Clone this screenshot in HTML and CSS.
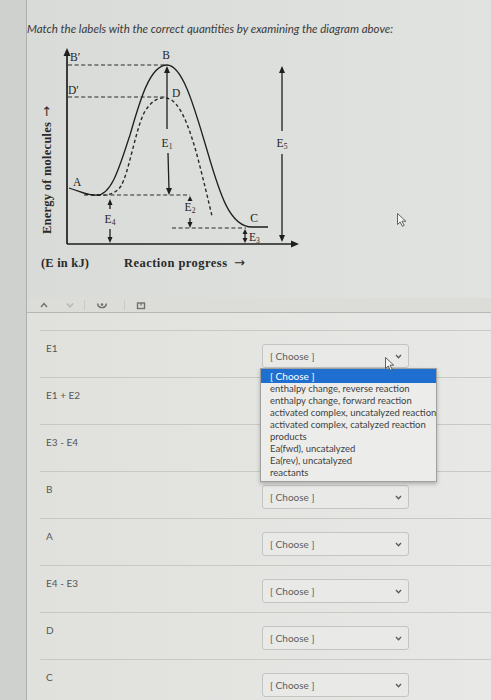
FILE: index.html
```html
<!DOCTYPE html>
<html lang="en">

<head>
	<meta charset="utf-8">
	<title>Quiz - matching question</title>
	<link rel="stylesheet" href="styles.css">
</head>

<body>
	<div class="sheet">
		<div class="question">
			<p class="prompt">Match the labels with the correct quantities by examining the diagram above:</p>
			<!-- energy profile, drawn in page coordinates -->
			<svg class="diagram" width="300" height="232" viewBox="27 44 300 232">
				<g stroke="#1e1e1e" fill="none">
					<line x1="67" y1="54" x2="67" y2="244" stroke-width="1.7" />
					<line x1="67" y1="244" x2="293" y2="244" stroke-width="1.7" />
				</g>
				<g stroke="#2a2a2a" stroke-width="1.2" stroke-dasharray="4 2.6" fill="none">
					<line x1="68" y1="65" x2="164" y2="65" />
					<line x1="68" y1="97" x2="165" y2="97" />
					<line x1="84" y1="195" x2="190" y2="195" />
					<line x1="172" y1="228" x2="246" y2="228" />
					<path d="M85,194 C100,196 114,197 121,186 C129,172 135,132 144,113 C151,101 158,97 166,98 C180,99 190,130 197,155 C203,178 208,199 212,216" stroke-width="1.4" stroke-dasharray="3.4 2.6" />
				</g>
				<path d="M69,188 C82,192 88,196 97,195 C112,195 120,165 130,135 C140,100 150,65 167,65 C183,65 195,110 207,150 C220,195 230,227 252,227 L268,227" stroke="#1e1e1e" stroke-width="1.3" fill="none" />
				<g stroke="#1e1e1e" stroke-width="1.3">
					<line x1="167" y1="70" x2="167" y2="129" />
					<line x1="168" y1="153" x2="169" y2="190" />
					<line x1="110" y1="205" x2="110" y2="209" />
					<line x1="110" y1="229" x2="110" y2="238" />
					<line x1="190" y1="218" x2="190" y2="223" />
					<line x1="245" y1="233" x2="245" y2="239" />
					<line x1="282" y1="72" x2="282" y2="131" />
					<line x1="282" y1="154" x2="282" y2="237" />
				</g>
				<g fill="#1e1e1e">
					<polygon points="67,48 63.5,56 70.5,56" />
					<polygon points="299,244 291,240.5 291,247.5" />
					<polygon points="167,66 164,73 170,73" />
					<polygon points="169,195 166,188 172,188" />
					<polygon points="110,199 107.5,205 112.5,205" />
					<polygon points="110,243 107.5,237 112.5,237" />
					<polygon points="190,196 187.5,201 192.5,201" />
					<polygon points="190,228 187.5,222 192.5,222" />
					<polygon points="245,229 242.5,234 247.5,234" />
					<polygon points="245,243 242.5,238 247.5,238" />
					<polygon points="282,66 279,73 285,73" />
					<polygon points="282,242 279,235 285,235" />
				</g>
				<g class="marks">
					<text x="70" y="61">B′</text>
					<text x="166" y="59" text-anchor="middle">B</text>
					<text x="68" y="94">D′</text>
					<text x="172" y="97">D</text>
					<text x="73" y="186">A</text>
					<text x="254" y="222" text-anchor="middle">C</text>
					<text x="167" y="147" text-anchor="middle">E<tspan class="sub" dy="2">1</tspan></text>
					<text x="110" y="223" text-anchor="middle">E<tspan class="sub" dy="2">4</tspan></text>
					<text x="190" y="211" text-anchor="middle">E<tspan class="sub" dy="2">2</tspan></text>
					<text x="249" y="241">E<tspan class="sub" dy="2">3</tspan></text>
					<text x="282" y="147" text-anchor="middle">E<tspan class="sub" dy="2">5</tspan></text>
				</g>
				<g class="axis-title">
					<text x="41" y="267" textLength="48">(E in kJ)</text>
					<text x="124" y="267" textLength="103">Reaction progress</text>
					<text class="arrow" x="234" y="267">→</text>
					<text transform="translate(51,234) rotate(-90)" textLength="112">Energy of molecules</text>
					<text class="arrow" transform="translate(51,117) rotate(-90)">→</text>
				</g>
			</svg>
		</div>

		<div class="toolbar">
			<svg class="tool" width="10" height="8" viewBox="0 0 10 8">
				<path d="M2,6 L5,2.5 L8,6" />
			</svg>
			<svg class="tool tool-faint" width="10" height="8" viewBox="0 0 10 8">
				<path d="M2,2.5 L5,6 L8,2.5" />
			</svg>
			<span class="tool-sep"></span>
			<svg class="tool" width="12" height="9" viewBox="0 0 12 9">
				<path d="M1.5,2.5 C2.5,8 9.5,8 10.5,2.5" />
				<circle cx="6" cy="3.5" r="1.3" />
			</svg>
			<span class="tool-sep"></span>
			<svg class="tool" width="10" height="9" viewBox="0 0 10 9">
				<rect x="1.5" y="2" width="7" height="5.5" />
				<path d="M5,2 L5,4.5" />
			</svg>
		</div>

		<div class="answers">
			<div class="row">
				<span class="label">E1</span>
				<div class="pick">
					<div class="select">[ Choose ]<svg class="chevron" width="7" height="5" viewBox="0 0 7 5"><path d="M1,1 L3.5,3.8 L6,1" /></svg></div>
					<ul class="options">
						<li class="current">[ Choose ]</li>
						<li>enthalpy change, reverse reaction</li>
						<li>enthalpy change, forward reaction</li>
						<li>activated complex, uncatalyzed reaction</li>
						<li>activated complex, catalyzed reaction</li>
						<li>products</li>
						<li>Ea(fwd), uncatalyzed</li>
						<li>Ea(rev), uncatalyzed</li>
						<li>reactants</li>
					</ul>
				</div>
			</div>
			<!-- the two selects below sit under the open list -->
			<div class="row">
				<span class="label">E1 + E2</span>
				<div class="pick covered">
					<div class="select">[ Choose ]<svg class="chevron" width="7" height="5" viewBox="0 0 7 5"><path d="M1,1 L3.5,3.8 L6,1" /></svg></div>
				</div>
			</div>
			<div class="row">
				<span class="label">E3 - E4</span>
				<div class="pick covered">
					<div class="select">[ Choose ]<svg class="chevron" width="7" height="5" viewBox="0 0 7 5"><path d="M1,1 L3.5,3.8 L6,1" /></svg></div>
				</div>
			</div>
			<div class="row">
				<span class="label">B</span>
				<div class="pick">
					<div class="select">[ Choose ]<svg class="chevron" width="7" height="5" viewBox="0 0 7 5"><path d="M1,1 L3.5,3.8 L6,1" /></svg></div>
				</div>
			</div>
			<div class="row">
				<span class="label">A</span>
				<div class="pick">
					<div class="select">[ Choose ]<svg class="chevron" width="7" height="5" viewBox="0 0 7 5"><path d="M1,1 L3.5,3.8 L6,1" /></svg></div>
				</div>
			</div>
			<div class="row">
				<span class="label">E4 - E3</span>
				<div class="pick">
					<div class="select">[ Choose ]<svg class="chevron" width="7" height="5" viewBox="0 0 7 5"><path d="M1,1 L3.5,3.8 L6,1" /></svg></div>
				</div>
			</div>
			<div class="row">
				<span class="label">D</span>
				<div class="pick">
					<div class="select">[ Choose ]<svg class="chevron" width="7" height="5" viewBox="0 0 7 5"><path d="M1,1 L3.5,3.8 L6,1" /></svg></div>
				</div>
			</div>
			<div class="row">
				<span class="label">C</span>
				<div class="pick">
					<div class="select">[ Choose ]<svg class="chevron" width="7" height="5" viewBox="0 0 7 5"><path d="M1,1 L3.5,3.8 L6,1" /></svg></div>
				</div>
			</div>
		</div>
	</div>

	<!-- mouse pointers -->
	<svg class="pointer pointer-chart" width="10" height="14" viewBox="0 0 10 14">
		<path d="M0.5,0.5 L0.5,11.5 L3.2,9 L5.4,13.3 L7.2,12.4 L5,8.2 L8.8,8.2 Z" />
	</svg>
	<svg class="pointer pointer-menu" width="10" height="14" viewBox="0 0 10 14">
		<path d="M0.5,0.5 L0.5,11.5 L3.2,9 L5.4,13.3 L7.2,12.4 L5,8.2 L8.8,8.2 Z" />
	</svg>
</body>

</html>
```

FILE: styles.css
```css
body {
	margin: 0;
	width: 491px;
	height: 700px;
	overflow: hidden;
	position: relative;
	background: #cfd1ce;
	font-family: Lato, "Open Sans", sans-serif;
	color: #4c4c4c;
}

.sheet {
	margin-left: 26px;
	min-height: 700px;
	border-left: 1px solid #aeb0ac;
	background: linear-gradient(90deg, #e0e1dd, #e8e9e6);
}

/* question text and figure */

.question {
	padding: 22px 0;
	background: linear-gradient(90deg, #d9dbd8, #e1e3e0);
}

.prompt {
	margin: 0;
	font-size: 11.5px;
	line-height: 14px;
	font-style: italic;
	color: #3a3a3a;
}

.diagram {
	display: block;
	margin-top: 8px;
}

.diagram text {
	font-family: "Liberation Serif", "DejaVu Serif", serif;
	fill: #1e1e1e;
}

.marks text {
	font-size: 11.5px;
}

.marks .sub {
	font-size: 7.5px;
}

.axis-title text {
	font-size: 12.5px;
	font-weight: bold;
	fill: #2a2a2a;
}

.diagram .arrow {
	font-family: "DejaVu Sans", sans-serif;
	font-size: 13px;
	font-weight: normal;
}

/* small tool strip under the figure */

.toolbar {
	height: 14px;
	display: flex;
	align-items: center;
	padding-left: 12px;
	background: #dcddd9;
	border-bottom: 1px solid #b6b8b4;
}

.tool {
	fill: none;
	stroke: #6f716e;
	stroke-width: 1.4;
	margin-right: 16px;
}

.tool circle {
	fill: #6f716e;
	stroke: none;
}

.tool-faint {
	stroke: #b4b6b2;
	margin-right: 9px;
}

.tool-sep {
	width: 1px;
	height: 10px;
	background: #c9cbc7;
	margin-right: 11px;
}

/* answer rows */

.answers {
	padding-top: 17px;
}

.row {
	margin-left: 13px;
	height: 47px;
	box-sizing: border-box;
	border-top: 1px solid #c8c9c5;
	display: grid;
	grid-template-columns: 222px 147px;
	align-items: start;
}

.label {
	padding: 10px 0 0 6px;
	font-size: 10px;
	line-height: 14px;
	color: #565656;
}

.pick {
	position: relative;
	margin-top: 13px;
}

.covered {
	visibility: hidden;
}

.select {
	height: 24px;
	box-sizing: border-box;
	display: flex;
	align-items: center;
	justify-content: space-between;
	padding: 0 6px 0 7px;
	border: 1px solid #c3c5c1;
	border-radius: 3px;
	background: #e9eae7;
	font-size: 10px;
	color: #5c5c5c;
}

.chevron {
	fill: none;
	stroke: #5a5c59;
	stroke-width: 1.3;
}

.options {
	position: absolute;
	top: 24px;
	left: -2px;
	z-index: 2;
	width: 177px;
	box-sizing: border-box;
	margin: 0;
	padding: 0 0 2px;
	list-style: none;
	border: 1px solid #9fa19e;
	background: #ecedea;
	box-shadow: 0 2px 4px rgba(0, 0, 0, 0.25);
	font-size: 9.5px;
	line-height: 12px;
	color: #3f3f3f;
}

.options li {
	padding-left: 9px;
	white-space: nowrap;
}

.options .current {
	line-height: 14px;
	font-size: 10px;
	background: #1f6fd0;
	color: #fff;
}

.pointer {
	position: absolute;
	z-index: 3;
}

.pointer path {
	fill: #f4f4f2;
	stroke: #505250;
	stroke-width: 0.9;
}

.pointer-chart {
	left: 397px;
	top: 213px;
}

.pointer-menu {
	left: 385px;
	top: 357px;
}
```
